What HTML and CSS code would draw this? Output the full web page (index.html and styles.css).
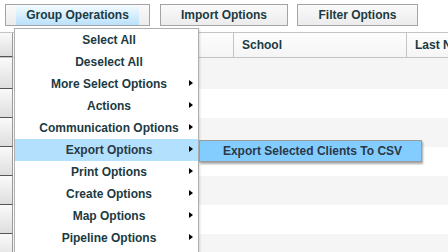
FILE: index.html
```html
<!DOCTYPE html>
<html>
<head>
<meta charset="utf-8">
<link rel="stylesheet" href="styles.css">
</head>
<body>
<div class="toolbar">
  <button class="tbtn active"><span class="tlabel">Group Operations</span></button>
  <button class="tbtn import"><span class="tlabel">Import Options</span></button>
  <button class="tbtn filter"><span class="tlabel">Filter Options</span></button>
</div>
<div class="grid">
  <div class="row head">
    <div class="sel"></div>
    <div class="col c1"></div>
    <div class="col c2">School</div>
    <div class="col c3">Last Name</div>
  </div>
  <div class="row odd first"><div class="sel"></div></div>
  <div class="row"><div class="sel"></div></div>
  <div class="row odd"><div class="sel"></div></div>
  <div class="row"><div class="sel"></div></div>
  <div class="row odd"><div class="sel"></div></div>
  <div class="row"><div class="sel"></div></div>
  <div class="row odd"><div class="sel"></div></div>
</div>
<div class="menu">
  <div class="item">Select All</div>
  <div class="item">Deselect All</div>
  <div class="item sub">More Select Options</div>
  <div class="item sub">Actions</div>
  <div class="item sub">Communication Options</div>
  <div class="item sub hover">Export Options</div>
  <div class="item sub">Print Options</div>
  <div class="item sub">Create Options</div>
  <div class="item sub">Map Options</div>
  <div class="item sub">Pipeline Options</div>
</div>
<div class="submenu">Export Selected Clients To CSV</div>
</body>
</html>
```
FILE: styles.css
```css
html, body { margin: 0; padding: 0; background: #fff; }
body {
  width: 448px; height: 252px; overflow: hidden; position: relative;
  font-family: "Liberation Sans", Arial, sans-serif; font-weight: bold; font-size: 12px;
  color: #1b3a42;
}
.toolbar { display: flex; padding: 4px 0 0 5px; height: 22px; }
.tbtn {
  height: 22px; border: 1px solid #a4a4a4; background: linear-gradient(#fafafa, #ececec);
  font: inherit; color: inherit; padding: 0 10px; margin: 0 10px 0 0; display: flex;
}
.tbtn.active { width: 145px; }
.tbtn.import { width: 128px; }
.tbtn.filter { width: 121px; margin-left: -1px; }
.tlabel { flex: 1; display: flex; align-items: center; justify-content: center; }
.tbtn.active .tlabel { background: linear-gradient(#f4fbff, #b9e1fb); }
.grid { margin-top: 6px; }
.row { display: flex; height: 29px; background: #fff; }
.row.odd { background: #f5f5f5; }
.row.first { height: 31px; }
.row.head { height: 24px; border-top: 1px solid #c4c4c4; border-bottom: 1px solid #c4c4c4; background: linear-gradient(#fdfdfd, #f5f5f5); }
.sel {
  width: 13px; flex: none; border-right: 1px solid #9a9a9a; border-bottom: 1px solid #555;
  background: linear-gradient(#fafafa, #dedede); box-sizing: border-box;
}
.col { display: flex; align-items: center; padding-left: 8px; border-left: 1px solid #c4c4c4; box-sizing: border-box; flex: none; }
.c1 { width: 220px; border-left: none; }
.c2 { width: 173px; }
.c3 { flex: 1 1 0; min-width: 0; overflow: hidden; white-space: nowrap; }
.menu {
  position: absolute; left: 14px; top: 28px; width: 183px; height: 240px;
  background: #fff; border: 1px solid #b0b0b0; box-shadow: 1px 1px 2px rgba(0,0,0,0.15);
}
.item { height: 22px; line-height: 22px; text-align: center; position: relative; white-space: nowrap; padding-left: 5px; }
.item.sub::after {
  content: ""; position: absolute; left: 174px; top: 7px;
  border-left: 4px solid #000; border-top: 3.5px solid transparent; border-bottom: 3.5px solid transparent;
}
.item.hover { background: #b3e0fc; color: #2a3946; }
.submenu {
  position: absolute; left: 199px; top: 140px; width: 217px; height: 20px; line-height: 20px;
  background: #82cdfe; border: 1px solid #9a9a9a; box-shadow: 1px 2px 2px rgba(0,0,0,0.35);
  text-align: center; color: #2b3848; font-size: 12px; padding-left: 4px;
  box-sizing: content-box;
}
```
